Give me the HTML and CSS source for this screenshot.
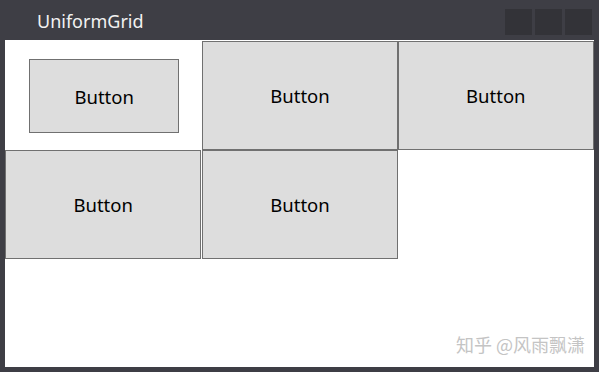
FILE: index.html
```html
<!DOCTYPE html>
<html>
<head>
<meta charset="utf-8">
<link rel="stylesheet" href="styles.css">
</head>
<body>
<div class="window">
  <div class="titlebar">
    <span class="title">UniformGrid</span>
    <div class="caption">
      <span class="cap-btn"></span>
      <span class="cap-btn"></span>
      <span class="cap-btn"></span>
    </div>
  </div>
  <div class="content">
    <div class="grid">
      <div class="cell cell-first"><button class="btn btn-small">Button</button></div>
      <div class="cell"><button class="btn">Button</button></div>
      <div class="cell"><button class="btn">Button</button></div>
      <div class="cell"><button class="btn">Button</button></div>
      <div class="cell"><button class="btn">Button</button></div>
    </div>
    <div class="watermark">知乎 @风雨飘潇</div>
  </div>
</div>
</body>
</html>
```

FILE: styles.css
```css
html, body {
  margin: 0;
  padding: 0;
  background: #3e3e45;
}
.window {
  width: 599px;
  height: 372px;
  background: #3e3e45;
  display: flex;
  flex-direction: column;
  box-sizing: border-box;
  padding: 0 5px 5px 5px;
  font-family: "Noto Sans", "Noto Sans CJK SC", sans-serif;
}
.titlebar {
  height: 40px;
  display: flex;
  align-items: center;
  justify-content: space-between;
  flex-shrink: 0;
}
.title {
  color: #f2f2f2;
  font-size: 18px;
  margin-left: 32px;
  margin-top: 2px;
}
.caption {
  display: flex;
  gap: 3px;
  margin-right: 2px;
  margin-top: 4px;
}
.cap-btn {
  width: 27px;
  height: 26px;
  background: #333338;
  display: block;
}
.content {
  flex: 1;
  background: #ffffff;
  position: relative;
}
.grid {
  display: grid;
  grid-template-columns: repeat(3, 1fr);
  grid-template-rows: 110px 109px 1fr;
}
.cell {
  display: flex;
  padding: 1px 0 0 0;
}
.cell:nth-child(3n+2) {
  padding-left: 1px;
}
.cell:nth-child(n+4) {
  padding-top: 0;
}
.cell-first {
  padding: 19px 22px 17px 24px;
}
.btn {
  flex: 1;
  margin: 0;
  background: #dddddd;
  border: 1px solid #707070;
  font-family: "Noto Sans", sans-serif;
  font-size: 18.5px;
  color: #000000;
  padding: 0;
}
.watermark {
  position: absolute;
  right: 9px;
  bottom: 10px;
  color: #c4c4c4;
  font-size: 18px;
  font-family: "Noto Sans CJK SC", sans-serif;
}
```
